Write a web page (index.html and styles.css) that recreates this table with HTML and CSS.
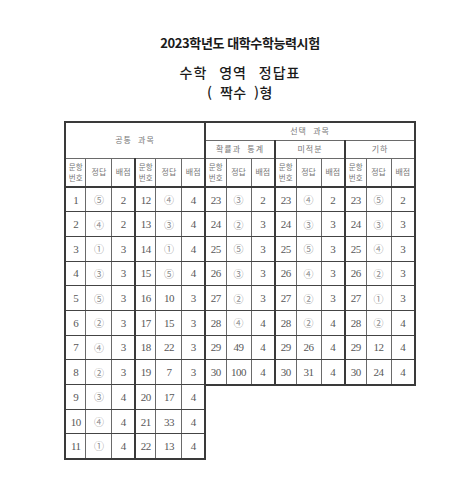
FILE: index.html
```html
<!DOCTYPE html>
<html lang="ko">
<head>
<meta charset="utf-8">
<title>2023학년도 대학수학능력시험 수학 영역 정답표</title>
<link rel="stylesheet" href="styles.css">
</head>
<body>
<div class="page">
  <header class="heading">
    <div class="exam">2023학년도 대학수학능력시험</div>
    <h1 class="subject">수학 영역 정답표</h1>
    <div class="type">( 짝수 )형</div>
  </header>
  <table class="answers">
    <colgroup>
      <col class="c-no"><col class="c-ans"><col class="c-pt">
      <col class="c-no"><col class="c-ans"><col class="c-pt">
      <col class="c-no"><col class="c-ans2"><col class="c-pt2">
      <col class="c-no"><col class="c-ans2"><col class="c-pt2">
      <col class="c-no"><col class="c-ans2"><col class="c-pt2">
    </colgroup>
    <thead>
      <tr class="h1">
        <th colspan="6" rowspan="2" class="gr sp">공통 과목</th>
        <th colspan="9" class="sp">선택 과목</th>
      </tr>
      <tr class="h2">
        <th colspan="3" class="gr sp">확률과 통계</th>
        <th colspan="3" class="gr sp">미적분</th>
        <th colspan="3" class="sp">기하</th>
      </tr>
      <tr class="h3">
        <th class="no"><span class="ln">문항</span><span class="ln">번호</span></th><th>정답</th><th class="gr">배점</th>
        <th class="no"><span class="ln">문항</span><span class="ln">번호</span></th><th>정답</th><th class="gr">배점</th>
        <th class="no"><span class="ln">문항</span><span class="ln">번호</span></th><th>정답</th><th class="gr">배점</th>
        <th class="no"><span class="ln">문항</span><span class="ln">번호</span></th><th>정답</th><th class="gr">배점</th>
        <th class="no"><span class="ln">문항</span><span class="ln">번호</span></th><th>정답</th><th class="gr">배점</th>
      </tr>
    </thead>
    <tbody>
      <tr><td>1</td><td class="ci">⑤</td><td class="gr">2</td><td>12</td><td class="ci">④</td><td class="gr">4</td><td>23</td><td class="ci">③</td><td class="gr">2</td><td>23</td><td class="ci">④</td><td class="gr">2</td><td>23</td><td class="ci">⑤</td><td class="gr">2</td></tr>
      <tr><td>2</td><td class="ci">④</td><td class="gr">2</td><td>13</td><td class="ci">③</td><td class="gr">4</td><td>24</td><td class="ci">②</td><td class="gr">3</td><td>24</td><td class="ci">③</td><td class="gr">3</td><td>24</td><td class="ci">③</td><td class="gr">3</td></tr>
      <tr><td>3</td><td class="ci">①</td><td class="gr">3</td><td>14</td><td class="ci">①</td><td class="gr">4</td><td>25</td><td class="ci">⑤</td><td class="gr">3</td><td>25</td><td class="ci">⑤</td><td class="gr">3</td><td>25</td><td class="ci">④</td><td class="gr">3</td></tr>
      <tr><td>4</td><td class="ci">③</td><td class="gr">3</td><td>15</td><td class="ci">⑤</td><td class="gr">4</td><td>26</td><td class="ci">③</td><td class="gr">3</td><td>26</td><td class="ci">④</td><td class="gr">3</td><td>26</td><td class="ci">②</td><td class="gr">3</td></tr>
      <tr><td>5</td><td class="ci">⑤</td><td class="gr">3</td><td>16</td><td>10</td><td class="gr">3</td><td>27</td><td class="ci">②</td><td class="gr">3</td><td>27</td><td class="ci">②</td><td class="gr">3</td><td>27</td><td class="ci">①</td><td class="gr">3</td></tr>
      <tr><td>6</td><td class="ci">②</td><td class="gr">3</td><td>17</td><td>15</td><td class="gr">3</td><td>28</td><td class="ci">④</td><td class="gr">4</td><td>28</td><td class="ci">②</td><td class="gr">4</td><td>28</td><td class="ci">②</td><td class="gr">4</td></tr>
      <tr><td>7</td><td class="ci">④</td><td class="gr">3</td><td>18</td><td>22</td><td class="gr">3</td><td>29</td><td>49</td><td class="gr">4</td><td>29</td><td>26</td><td class="gr">4</td><td>29</td><td>12</td><td class="gr">4</td></tr>
      <tr class="last-sel"><td>8</td><td class="ci">②</td><td class="gr">3</td><td>19</td><td>7</td><td class="gr">3</td><td>30</td><td>100</td><td class="gr">4</td><td>30</td><td>31</td><td class="gr">4</td><td>30</td><td>24</td><td class="gr">4</td></tr>
      <tr><td>9</td><td class="ci">③</td><td class="gr">4</td><td>20</td><td>17</td><td class="gr">4</td></tr>
      <tr><td>10</td><td class="ci">④</td><td class="gr">4</td><td>21</td><td>33</td><td class="gr">4</td></tr>
      <tr class="last"><td>11</td><td class="ci">①</td><td class="gr">4</td><td>22</td><td>13</td><td class="gr">4</td></tr>
    </tbody>
  </table>
</div>
</body>
</html>
```

FILE: styles.css
```css
html, body {
  margin: 0;
  padding: 0;
  background: #fff;
}

.page {
  width: 474px;
  box-sizing: border-box;
  padding-left: 6px;
  font-family: "Noto Sans CJK KR", "Noto Sans", sans-serif;
  color: #222;
}

.heading {
  text-align: center;
  padding-top: 35px;
}

.exam {
  font-size: 13px;
  line-height: 16px;
  font-weight: 700;
  letter-spacing: -0.4px;
  color: #1a1a1a;
}

.subject {
  margin: 11px 0 0;
  font-size: 14px;
  line-height: 20px;
  font-weight: 500;
  letter-spacing: 1px;
  word-spacing: 7px;
  color: #1a1a1a;
}

.type {
  font-size: 14px;
  line-height: 20px;
  font-weight: 500;
  letter-spacing: 0.5px;
  word-spacing: 3px;
  color: #1a1a1a;
}

.answers {
  margin: 19px auto 0;
  border-collapse: collapse;
  table-layout: fixed;
  width: 351px;
  font-family: "Liberation Serif", "Noto Sans CJK KR", serif;
  color: #585858;
}

.c-no { width: 21px; }
.c-ans { width: 26px; }
.c-pt { width: 23px; }
.c-ans2 { width: 25px; }
.c-pt2 { width: 24px; }

.answers th,
.answers td {
  padding: 0;
  text-align: center;
  vertical-align: middle;
  border: 1px solid #6a6a6a;
  white-space: nowrap;
  overflow: hidden;
}

.answers th {
  font-family: "Noto Sans CJK KR", sans-serif;
  font-weight: 400;
  font-size: 8px;
  color: #777;
  line-height: 12px;
}

.answers th.sp {
  letter-spacing: 1px;
  word-spacing: 3px;
}

.answers th.no .ln {
  display: block;
  font-size: 7.5px;
  line-height: 11px;
}

.answers td {
  font-size: 11px;
  letter-spacing: -0.5px;
}

.answers td.ci {
  font-family: "Noto Sans CJK KR", sans-serif;
  font-size: 10px;
  color: #8a8a8a;
  letter-spacing: 0;
}

.answers .gr {
  border-right: 2px solid #3a3a3a;
}

.answers tr > :first-child {
  border-left: 2px solid #3a3a3a;
}

.answers tr.h1 > * {
  border-top: 2px solid #3a3a3a;
}

.answers tr.h1 > :last-child,
.answers tr.h2 > :last-child,
.answers tr.h3 > :last-child,
.answers tbody tr > :nth-child(15) {
  border-right: 2px solid #3a3a3a;
}

.answers tr.h3 > * {
  border-bottom: 2px solid #3a3a3a;
}

.answers tr.h1 { height: 18px; }
.answers tr.h2 { height: 18px; }
.answers tr.h3 { height: 29px; }

.answers tbody tr {
  height: 24.7px;
}

.answers tbody td {
  border-top-color: #444;
  border-bottom-color: #444;
}

.answers tr.last-sel > :nth-child(n+7) {
  border-bottom: 2px solid #3a3a3a;
}

.answers tr.last > * {
  border-bottom: 2px solid #3a3a3a;
}
```
